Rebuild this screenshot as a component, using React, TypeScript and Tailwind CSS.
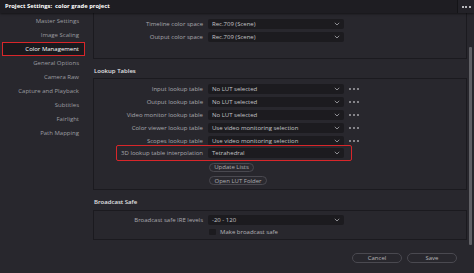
import React from "react";

const font = { fontFamily: '"Open Sans", "Liberation Sans", sans-serif' };

function Chevron() {
  return (
    <svg width="6" height="4" viewBox="0 0 6 4" className="shrink-0">
      <path d="M0.8 0.8 L3 3 L5.2 0.8" fill="none" stroke="#9a9a9e" strokeWidth="0.9" />
    </svg>
  );
}

function Dots() {
  return (
    <div className="flex items-center gap-[2px] ml-[5px]">
      <div className="w-[2px] h-[2px] rounded-full bg-[#a4a4a8]" />
      <div className="w-[2px] h-[2px] rounded-full bg-[#a4a4a8]" />
      <div className="w-[2px] h-[2px] rounded-full bg-[#a4a4a8]" />
    </div>
  );
}

function Select({ value }: { value: string }) {
  return (
    <div className="w-[136px] h-[10px] bg-[#1c1b1f] rounded-[2px] flex items-center justify-between pl-[4px] pr-[4px] text-[#c4c4c6]">
      <span>{value}</span>
      <Chevron />
    </div>
  );
}

function Row({
  label,
  value,
  dots,
  highlight,
}: {
  label: string;
  value: string;
  dots?: boolean;
  highlight?: boolean;
}) {
  return (
    <div className="relative h-[12.8px] flex items-center">
      <div className="w-[109px] text-right text-[#a9a9ad]">{label}</div>
      <div className="ml-[5px]">
        <Select value={value} />
      </div>
      {dots && <Dots />}
      {highlight && (
        <div className="absolute left-[22px] top-[-1.5px] w-[236px] h-[16px] border-[1.5px] border-[#d8262a] rounded-[2px]" />
      )}
    </div>
  );
}

function Pill({ label, w }: { label: string; w: string }) {
  return (
    <div
      className={`h-[9px] ${w} rounded-full border border-[#4a4950] bg-[#2a292f] flex items-center justify-center text-[#aeaeb2]`}
    >
      {label}
    </div>
  );
}

const nav = [
  "Master Settings",
  "Image Scaling",
  "Color Management",
  "General Options",
  "Camera Raw",
  "Capture and Playback",
  "Subtitles",
  "Fairlight",
  "Path Mapping",
];

export default function App() {
  return (
    <div
      className="w-[474px] h-[273px] bg-[#28272d] flex flex-col overflow-hidden text-[6px] leading-none"
      style={font}
    >
      {/* title bar */}
      <div className="h-[13px] bg-[#1e1d22] flex items-center shrink-0 shadow-[0_1px_2px_rgba(0,0,0,0.5)] relative z-10">
        <div className="flex-1 pl-[5px] text-white font-bold text-[5.8px]">
          Project Settings:&nbsp; color grade project
        </div>
        <div className="w-[17px] h-full border-l border-[#141417] bg-[#232228] flex items-center justify-center">
          <div className="flex gap-[1.5px]">
            <div className="w-[2px] h-[2px] bg-[#b8b8bc]" />
            <div className="w-[2px] h-[2px] bg-[#b8b8bc]" />
            <div className="w-[2px] h-[2px] bg-[#b8b8bc]" />
          </div>
        </div>
      </div>

      <div className="flex flex-1 min-h-0">
        {/* sidebar */}
        <div className="w-[90px] shrink-0 pt-[1px] flex flex-col">
          {nav.map((n) =>
            n === "Color Management" ? (
              <div
                key={n}
                className="ml-[2px] w-[83px] h-[14px] border-[1.5px] border-[#d8262a] bg-[#1a191d] flex items-center justify-end pr-[5px] text-white"
              >
                {n}
              </div>
            ) : (
              <div
                key={n}
                className="h-[14px] flex items-center justify-end pr-[11px] text-[#9d9da1]"
              >
                {n}
              </div>
            )
          )}
        </div>

        {/* main */}
        <div className="flex-1 flex flex-col pl-[3px]">
          {/* top (scrolled) panel */}
          <div className="h-[46px] w-[374px] border-x border-b border-[#1b1a1f] pt-[5px] flex flex-col">
            <Row label="Timeline color space" value="Rec.709 (Scene)" />
            <Row label="Output color space" value="Rec.709 (Scene)" />
          </div>

          <div className="h-[19px] flex items-end pb-[4px] pl-[1px] text-[#e2e2e4] font-semibold">
            Lookup Tables
          </div>

          <div className="h-[112px] w-[374px] border border-[#1b1a1f] pt-[4px] flex flex-col">
            <Row label="Input lookup table" value="No LUT selected" dots />
            <Row label="Output lookup table" value="No LUT selected" dots />
            <Row label="Video monitor lookup table" value="No LUT selected" dots />
            <Row label="Color viewer lookup table" value="Use video monitoring selection" dots />
            <Row label="Scopes lookup table" value="Use video monitoring selection" dots />
            <Row label="3D lookup table interpolation" value="Tetrahedral" highlight />
            <div className="pl-[115px] mt-[3px] flex flex-col gap-[4.5px]">
              <Pill label="Update Lists" w="w-[45px]" />
              <Pill label="Open LUT Folder" w="w-[58px]" />
            </div>
          </div>

          <div className="h-[20px] flex items-end pb-[5px] pl-[1px] text-[#e2e2e4] font-semibold">
            Broadcast Safe
          </div>

          <div className="h-[30px] w-[374px] border border-[#1b1a1f] pt-[3px] flex flex-col">
            <Row label="Broadcast safe IRE levels" value="-20 - 120" />
            <div className="pl-[115px] flex items-center h-[11px]">
              <div className="w-[7px] h-[6px] bg-[#1c1b1f] rounded-[1px]" />
              <span className="ml-[4px] text-[#b4b4b8]">Make broadcast safe</span>
            </div>
          </div>

          <div className="flex justify-end gap-[5px] pr-[10px] mt-[13px]">
            <div className="w-[50px] h-[10px] rounded-full border border-[#4a4950] flex items-center justify-center text-[#b4b4b8]">
              Cancel
            </div>
            <div className="w-[50px] h-[10px] rounded-full border border-[#4a4950] flex items-center justify-center text-[#b4b4b8]">
              Save
            </div>
          </div>
        </div>

        {/* scrollbar */}
        <div className="w-[7px] shrink-0 pt-[34px] pl-[2px]">
          <div className="w-[3px] h-[198px] bg-[#616166] rounded-[1px]" />
        </div>
      </div>
    </div>
  );
}
